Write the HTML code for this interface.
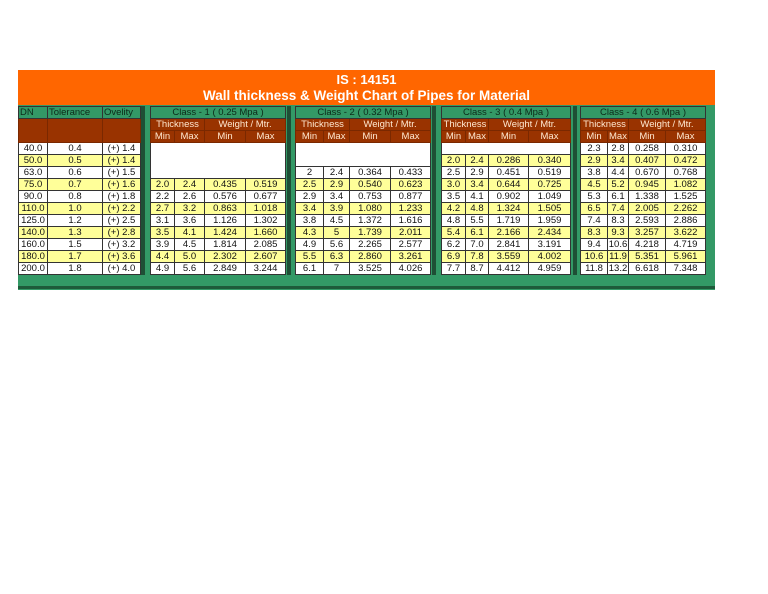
<!DOCTYPE html>
<html><head><meta charset="utf-8"><style>
body{margin:0;width:768px;height:594px;background:#fff;position:relative;font-family:"Liberation Sans",sans-serif;overflow:hidden}
#wrap{position:absolute;left:18px;top:70px;width:697px;height:219px;background:#339966;border-top:1px solid #999}
#hdr{position:absolute;left:18px;top:70px;width:697px;height:35px;background:#ff6600;color:#fff;font-weight:bold;text-align:center}
#hdr .a{position:absolute;top:2px;width:100%;font-size:13px}
#hdr .b{position:absolute;top:18px;width:100%;font-size:13.5px}
#foot{position:absolute;left:18px;top:286px;width:697px;height:3px;background:#1e5a3a}
.sep{position:absolute;top:106px;width:4px;height:169px;background:#1e4f35}
table{position:absolute;border-collapse:collapse;table-layout:fixed;font-size:9.5px;color:#111;border:1px solid #222}
td{border:1px solid #333;padding:0;height:11px;line-height:10px;text-align:center;white-space:nowrap;overflow:hidden}
tr.h td{height:11px}
.g{background:#339966;color:#0d2a1a;border-color:#333}
.br{background:#993300;color:#ffe8d0;border-color:#7a2800}
.y td{background:#ffff99}
.w td{background:#fff}
td.l{text-align:left;padding-left:1px}
</style></head><body>
<div id="wrap"></div>
<div id="hdr"><div class="a">IS : 14151</div><div class="b">Wall thickness &amp; Weight Chart of Pipes for Material</div></div>
<div id="foot"></div>
<div class="sep" style="left:141px"></div>
<div class="sep" style="left:287px"></div>
<div class="sep" style="left:432px"></div>
<div class="sep" style="left:573px"></div>

<table style="left:18px;top:106px;width:122px">
<colgroup><col style="width:29px"><col style="width:55px"><col style="width:38px"></colgroup>
<tr class="h"><td class="g l">DN</td><td class="g l">Tolerance</td><td class="g l">Ovelity</td></tr>
<tr class="h"><td class="br" rowspan="2" style="height:23px"></td><td class="br" rowspan="2"></td><td class="br" rowspan="2"></td></tr>
<tr class="h"></tr>
<tr class="w"><td>40.0</td><td>0.4</td><td>(+) 1.4</td></tr>
<tr class="y"><td>50.0</td><td>0.5</td><td>(+) 1.4</td></tr>
<tr class="w"><td>63.0</td><td>0.6</td><td>(+) 1.5</td></tr>
<tr class="y"><td>75.0</td><td>0.7</td><td>(+) 1.6</td></tr>
<tr class="w"><td>90.0</td><td>0.8</td><td>(+) 1.8</td></tr>
<tr class="y"><td>110.0</td><td>1.0</td><td>(+) 2.2</td></tr>
<tr class="w"><td>125.0</td><td>1.2</td><td>(+) 2.5</td></tr>
<tr class="y"><td>140.0</td><td>1.3</td><td>(+) 2.8</td></tr>
<tr class="w"><td>160.0</td><td>1.5</td><td>(+) 3.2</td></tr>
<tr class="y"><td>180.0</td><td>1.7</td><td>(+) 3.6</td></tr>
<tr class="w"><td>200.0</td><td>1.8</td><td>(+) 4.0</td></tr>
</table>

<table style="left:150px;top:106px;width:135px">
<colgroup><col style="width:24px"><col style="width:30px"><col style="width:41px"><col style="width:40px"></colgroup>
<tr class="h"><td class="g" colspan="4">Class - 1 ( 0.25 Mpa )</td></tr>
<tr class="h"><td class="br" colspan="2">Thickness</td><td class="br" colspan="2">Weight / Mtr.</td></tr>
<tr class="h"><td class="br">Min</td><td class="br">Max</td><td class="br">Min</td><td class="br">Max</td></tr>
<tr class="w"><td colspan="4" rowspan="3" style="height:35px"></td></tr><tr class="w"></tr><tr class="w"></tr>
<tr class="y"><td>2.0</td><td>2.4</td><td>0.435</td><td>0.519</td></tr>
<tr class="w"><td>2.2</td><td>2.6</td><td>0.576</td><td>0.677</td></tr>
<tr class="y"><td>2.7</td><td>3.2</td><td>0.863</td><td>1.018</td></tr>
<tr class="w"><td>3.1</td><td>3.6</td><td>1.126</td><td>1.302</td></tr>
<tr class="y"><td>3.5</td><td>4.1</td><td>1.424</td><td>1.660</td></tr>
<tr class="w"><td>3.9</td><td>4.5</td><td>1.814</td><td>2.085</td></tr>
<tr class="y"><td>4.4</td><td>5.0</td><td>2.302</td><td>2.607</td></tr>
<tr class="w"><td>4.9</td><td>5.6</td><td>2.849</td><td>3.244</td></tr>
</table>

<table style="left:295px;top:106px;width:135px">
<colgroup><col style="width:28px"><col style="width:26px"><col style="width:41px"><col style="width:40px"></colgroup>
<tr class="h"><td class="g" colspan="4">Class - 2 ( 0.32 Mpa )</td></tr>
<tr class="h"><td class="br" colspan="2">Thickness</td><td class="br" colspan="2">Weight / Mtr.</td></tr>
<tr class="h"><td class="br">Min</td><td class="br">Max</td><td class="br">Min</td><td class="br">Max</td></tr>
<tr class="w"><td colspan="4" rowspan="2" style="height:23px"></td></tr><tr class="w"></tr>
<tr class="w"><td>2</td><td>2.4</td><td>0.364</td><td>0.433</td></tr>
<tr class="y"><td>2.5</td><td>2.9</td><td>0.540</td><td>0.623</td></tr>
<tr class="w"><td>2.9</td><td>3.4</td><td>0.753</td><td>0.877</td></tr>
<tr class="y"><td>3.4</td><td>3.9</td><td>1.080</td><td>1.233</td></tr>
<tr class="w"><td>3.8</td><td>4.5</td><td>1.372</td><td>1.616</td></tr>
<tr class="y"><td>4.3</td><td>5</td><td>1.739</td><td>2.011</td></tr>
<tr class="w"><td>4.9</td><td>5.6</td><td>2.265</td><td>2.577</td></tr>
<tr class="y"><td>5.5</td><td>6.3</td><td>2.860</td><td>3.261</td></tr>
<tr class="w"><td>6.1</td><td>7</td><td>3.525</td><td>4.026</td></tr>
</table>

<table style="left:441px;top:106px;width:129px">
<colgroup><col style="width:24px"><col style="width:23px"><col style="width:40px"><col style="width:42px"></colgroup>
<tr class="h"><td class="g" colspan="4">Class - 3 ( 0.4 Mpa )</td></tr>
<tr class="h"><td class="br" colspan="2">Thickness</td><td class="br" colspan="2">Weight / Mtr.</td></tr>
<tr class="h"><td class="br">Min</td><td class="br">Max</td><td class="br">Min</td><td class="br">Max</td></tr>
<tr class="w"><td colspan="4"></td></tr>
<tr class="y"><td>2.0</td><td>2.4</td><td>0.286</td><td>0.340</td></tr>
<tr class="w"><td>2.5</td><td>2.9</td><td>0.451</td><td>0.519</td></tr>
<tr class="y"><td>3.0</td><td>3.4</td><td>0.644</td><td>0.725</td></tr>
<tr class="w"><td>3.5</td><td>4.1</td><td>0.902</td><td>1.049</td></tr>
<tr class="y"><td>4.2</td><td>4.8</td><td>1.324</td><td>1.505</td></tr>
<tr class="w"><td>4.8</td><td>5.5</td><td>1.719</td><td>1.959</td></tr>
<tr class="y"><td>5.4</td><td>6.1</td><td>2.166</td><td>2.434</td></tr>
<tr class="w"><td>6.2</td><td>7.0</td><td>2.841</td><td>3.191</td></tr>
<tr class="y"><td>6.9</td><td>7.8</td><td>3.559</td><td>4.002</td></tr>
<tr class="w"><td>7.7</td><td>8.7</td><td>4.412</td><td>4.959</td></tr>
</table>

<table style="left:580px;top:106px;width:125px">
<colgroup><col style="width:27px"><col style="width:21px"><col style="width:37px"><col style="width:40px"></colgroup>
<tr class="h"><td class="g" colspan="4">Class - 4 ( 0.6 Mpa )</td></tr>
<tr class="h"><td class="br" colspan="2">Thickness</td><td class="br" colspan="2">Weight / Mtr.</td></tr>
<tr class="h"><td class="br">Min</td><td class="br">Max</td><td class="br">Min</td><td class="br">Max</td></tr>
<tr class="w"><td>2.3</td><td>2.8</td><td>0.258</td><td>0.310</td></tr>
<tr class="y"><td>2.9</td><td>3.4</td><td>0.407</td><td>0.472</td></tr>
<tr class="w"><td>3.8</td><td>4.4</td><td>0.670</td><td>0.768</td></tr>
<tr class="y"><td>4.5</td><td>5.2</td><td>0.945</td><td>1.082</td></tr>
<tr class="w"><td>5.3</td><td>6.1</td><td>1.338</td><td>1.525</td></tr>
<tr class="y"><td>6.5</td><td>7.4</td><td>2.005</td><td>2.262</td></tr>
<tr class="w"><td>7.4</td><td>8.3</td><td>2.593</td><td>2.886</td></tr>
<tr class="y"><td>8.3</td><td>9.3</td><td>3.257</td><td>3.622</td></tr>
<tr class="w"><td>9.4</td><td>10.6</td><td>4.218</td><td>4.719</td></tr>
<tr class="y"><td>10.6</td><td>11.9</td><td>5.351</td><td>5.961</td></tr>
<tr class="w"><td>11.8</td><td>13.2</td><td>6.618</td><td>7.348</td></tr>
</table>
</body></html>
